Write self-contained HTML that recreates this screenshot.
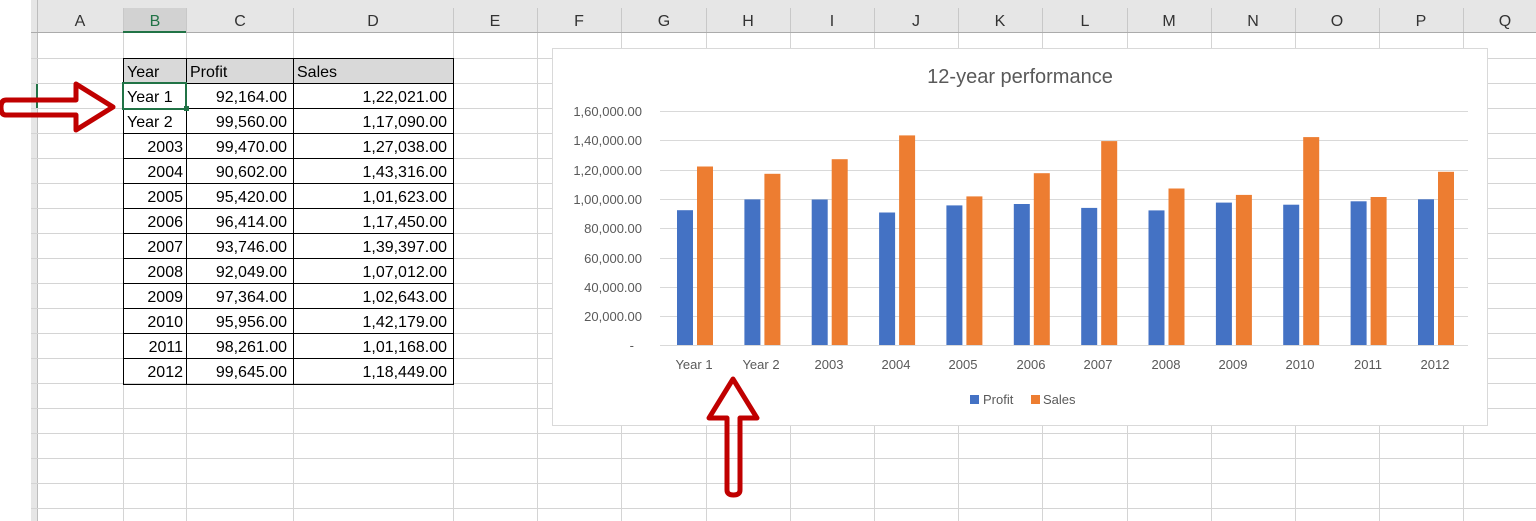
<!DOCTYPE html><html><head><style>body{margin:0;width:1536px;height:521px;overflow:hidden;background:#fff}svg{display:block}text{font-family:"Liberation Sans",sans-serif}</style></head><body>
<svg width="1536" height="521" xmlns="http://www.w3.org/2000/svg">
<rect x="0" y="0" width="1536" height="521" fill="#fff"/>
<rect x="31" y="0" width="1505" height="33" fill="#e6e6e6"/>
<rect x="31" y="33" width="7" height="488" fill="#e6e6e6"/>
<path d="M37.5 0V521" stroke="#bdbdbd"/>
<rect x="123" y="8" width="63" height="25" fill="#d2d2d2"/>
<g stroke="#d4d4d4" stroke-width="1">
<path d="M123.5 33V521M186.5 33V521M293.5 33V521M453.5 33V521M537.5 33V521M621.5 33V521M706.5 33V521M790.5 33V521M874.5 33V521M958.5 33V521M1042.5 33V521M1127.5 33V521M1211.5 33V521M1295.5 33V521M1379.5 33V521M1463.5 33V521"/>
<path d="M31 58.5H1536M31 83.5H1536M31 108.5H1536M31 133.5H1536M31 158.5H1536M31 183.5H1536M31 208.5H1536M31 233.5H1536M31 258.5H1536M31 283.5H1536M31 308.5H1536M31 333.5H1536M31 358.5H1536M31 383.5H1536M31 408.5H1536M31 433.5H1536M31 458.5H1536M31 483.5H1536M31 508.5H1536"/>
</g>
<g stroke="#c8c8c8"><path d="M123.5 8V33M186.5 8V33M293.5 8V33M453.5 8V33M537.5 8V33M621.5 8V33M706.5 8V33M790.5 8V33M874.5 8V33M958.5 8V33M1042.5 8V33M1127.5 8V33M1211.5 8V33M1295.5 8V33M1379.5 8V33M1463.5 8V33"/></g>
<path d="M31 32.5H1536" stroke="#ababab"/>
<path d="M123 32H186" stroke="#217346" stroke-width="2"/>
<path d="M37 84V108" stroke="#217346" stroke-width="2"/>
<g font-size="16" fill="#333" text-anchor="middle">
<text x="80" y="26">A</text><text x="155" y="26" fill="#217346">B</text><text x="240" y="26">C</text><text x="373" y="26">D</text><text x="495" y="26">E</text><text x="579" y="26">F</text><text x="664" y="26">G</text><text x="748" y="26">H</text><text x="832" y="26">I</text><text x="916" y="26">J</text><text x="1000" y="26">K</text><text x="1085" y="26">L</text><text x="1169" y="26">M</text><text x="1253" y="26">N</text><text x="1337" y="26">O</text><text x="1421" y="26">P</text><text x="1505" y="26">Q</text>
</g>
<rect x="123" y="58" width="330" height="25" fill="#d9d9d9"/>
<g stroke="#000" stroke-width="1" fill="none">
<rect x="123.5" y="58.5" width="330" height="326"/>
<path d="M186.5 58V384M293.5 58V384"/>
<path d="M123 83.5H453M123 108.5H453M123 133.5H453M123 158.5H453M123 183.5H453M123 208.5H453M123 233.5H453M123 258.5H453M123 283.5H453M123 308.5H453M123 333.5H453M123 358.5H453"/>
</g>
<rect x="123" y="83" width="63" height="26" fill="none" stroke="#217346" stroke-width="2"/>
<rect x="184" y="106" width="5" height="5" fill="#217346"/>
<g font-size="16" fill="#000">
<text x="127" y="77">Year</text><text x="190" y="77">Profit</text><text x="297" y="77">Sales</text>
<text x="127" y="102">Year 1</text><text x="127" y="127">Year 2</text>
</g>
<g font-size="16" fill="#000" text-anchor="end">
<text x="183" y="152">2003</text><text x="183" y="177">2004</text><text x="183" y="202">2005</text><text x="183" y="227">2006</text><text x="183" y="252">2007</text><text x="183" y="277">2008</text><text x="183" y="302">2009</text><text x="183" y="327">2010</text><text x="183" y="352">2011</text><text x="183" y="377">2012</text>
<text x="287" y="102">92,164.00</text><text x="287" y="127">99,560.00</text><text x="287" y="152">99,470.00</text><text x="287" y="177">90,602.00</text><text x="287" y="202">95,420.00</text><text x="287" y="227">96,414.00</text><text x="287" y="252">93,746.00</text><text x="287" y="277">92,049.00</text><text x="287" y="302">97,364.00</text><text x="287" y="327">95,956.00</text><text x="287" y="352">98,261.00</text><text x="287" y="377">99,645.00</text>
<text x="447" y="102">1,22,021.00</text><text x="447" y="127">1,17,090.00</text><text x="447" y="152">1,27,038.00</text><text x="447" y="177">1,43,316.00</text><text x="447" y="202">1,01,623.00</text><text x="447" y="227">1,17,450.00</text><text x="447" y="252">1,39,397.00</text><text x="447" y="277">1,07,012.00</text><text x="447" y="302">1,02,643.00</text><text x="447" y="327">1,42,179.00</text><text x="447" y="352">1,01,168.00</text><text x="447" y="377">1,18,449.00</text>
</g>
<rect x="552.5" y="48.5" width="935" height="377" fill="#fff" stroke="#d9d9d9"/>
<text x="1020" y="83" font-size="20" fill="#595959" text-anchor="middle">12-year performance</text>
<g stroke="#d9d9d9"><path d="M660 111.5H1468M660 140.5H1468M660 170.5H1468M660 199.5H1468M660 228.5H1468M660 258.5H1468M660 287.5H1468M660 316.5H1468M660 345.5H1468"/></g>
<g font-size="13" fill="#595959" text-anchor="end">
<text x="642" y="116">1,60,000.00</text><text x="642" y="145">1,40,000.00</text><text x="642" y="175">1,20,000.00</text><text x="642" y="204">1,00,000.00</text><text x="642" y="233">80,000.00</text><text x="642" y="263">60,000.00</text><text x="642" y="292">40,000.00</text><text x="642" y="321">20,000.00</text><text x="634" y="350">-</text>
</g>
<g fill="#4472c4">
<rect x="677" y="210.2" width="16" height="134.8"/><rect x="744.4" y="199.4" width="16" height="145.6"/><rect x="811.7" y="199.5" width="16" height="145.5"/><rect x="879.1" y="212.5" width="16" height="132.5"/><rect x="946.4" y="205.4" width="16" height="139.6"/><rect x="1013.8" y="204" width="16" height="141"/><rect x="1081.2" y="207.9" width="16" height="137.1"/><rect x="1148.5" y="210.4" width="16" height="134.6"/><rect x="1215.9" y="202.6" width="16" height="142.4"/><rect x="1283.2" y="204.7" width="16" height="140.3"/><rect x="1350.6" y="201.3" width="16" height="143.7"/><rect x="1418" y="199.3" width="16" height="145.7"/>
</g>
<g fill="#ed7d31">
<rect x="697" y="166.5" width="16" height="178.5"/><rect x="764.4" y="173.8" width="16" height="171.2"/><rect x="831.7" y="159.2" width="16" height="185.8"/><rect x="899.1" y="135.4" width="16" height="209.6"/><rect x="966.4" y="196.4" width="16" height="148.6"/><rect x="1033.8" y="173.2" width="16" height="171.8"/><rect x="1101.2" y="141.1" width="16" height="203.9"/><rect x="1168.5" y="188.5" width="16" height="156.5"/><rect x="1235.9" y="194.9" width="16" height="150.1"/><rect x="1303.2" y="137.1" width="16" height="207.9"/><rect x="1370.6" y="197" width="16" height="148"/><rect x="1438" y="171.8" width="16" height="173.2"/>
</g>
<g font-size="13" fill="#595959" text-anchor="middle">
<text x="694" y="369">Year 1</text><text x="761" y="369">Year 2</text><text x="829" y="369">2003</text><text x="896" y="369">2004</text><text x="963" y="369">2005</text><text x="1031" y="369">2006</text><text x="1098" y="369">2007</text><text x="1166" y="369">2008</text><text x="1233" y="369">2009</text><text x="1300" y="369">2010</text><text x="1368" y="369">2011</text><text x="1435" y="369">2012</text>
</g>
<rect x="970" y="395" width="9" height="9" fill="#4472c4"/><text x="983" y="404" font-size="13" fill="#595959">Profit</text>
<rect x="1031" y="395" width="9" height="9" fill="#ed7d31"/><text x="1043" y="404" font-size="13" fill="#595959">Sales</text>
<g fill="none" stroke="#c00000" stroke-width="5" stroke-linejoin="round">
<path d="M6 100H76V84L113 107L76 130V115H6Q1 115 1 107.5Q1 100 6 100Z"/>
<path d="M733 379L757 418H740V490Q740 495 733.5 495Q727 495 727 490V418H709Z"/>
</g>
</svg>
</body></html>
